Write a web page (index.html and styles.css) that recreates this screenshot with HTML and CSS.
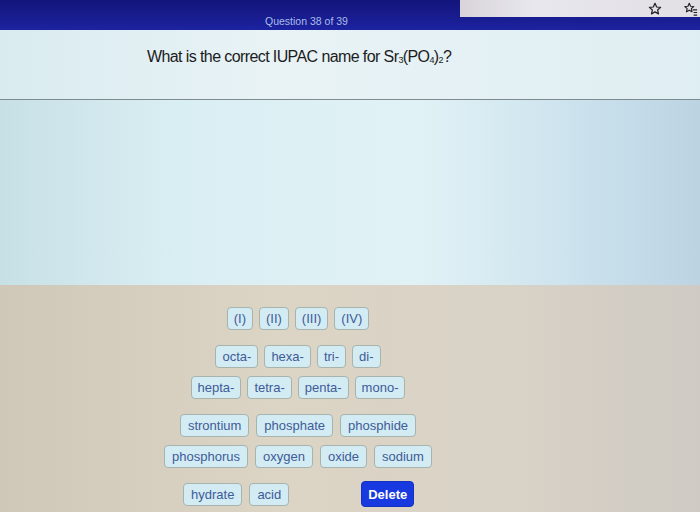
FILE: index.html
```html
<!DOCTYPE html>
<html>
<head>
<meta charset="utf-8">
<link rel="stylesheet" href="styles.css">
</head>
<body>
<div class="page">
  <div class="chrome">
    <svg class="ic" viewBox="0 0 16 16" width="14" height="14"><path d="M8 1.5l1.9 4.2 4.5.4-3.4 3 1 4.5L8 11.3 4 13.6l1-4.5-3.4-3 4.5-.4z" fill="none" stroke="#222" stroke-width="1.4" stroke-linejoin="round"/></svg>
    <svg class="ic" viewBox="0 0 16 16" width="14" height="14"><path d="M6 1.5l1.5 3.4 3.6.3-2.7 2.4.8 3.6L6 9.3 2.8 11.2l.8-3.6L.9 5.2l3.6-.3z" fill="none" stroke="#222" stroke-width="1.3" stroke-linejoin="round"/><path d="M10 9h5M11 12h4M11 15h4" stroke="#222" stroke-width="1.3"/></svg>
  </div>
  <header class="topbar">
    <span class="qnum">Question 38 of 39</span>
  </header>
  <section class="question">
    <p class="qtext">What is the correct IUPAC name for Sr<sub>3</sub>(PO<sub>4</sub>)<sub>2</sub>?</p>
  </section>
  <section class="answer"></section>
  <section class="bank">
    <div class="group">
      <div class="row"><span class="tile">(I)</span><span class="tile">(II)</span><span class="tile">(III)</span><span class="tile">(IV)</span></div>
    </div>
    <div class="group">
      <div class="row"><span class="tile">octa-</span><span class="tile">hexa-</span><span class="tile">tri-</span><span class="tile">di-</span></div>
      <div class="row"><span class="tile">hepta-</span><span class="tile">tetra-</span><span class="tile">penta-</span><span class="tile">mono-</span></div>
    </div>
    <div class="group wide">
      <div class="row"><span class="tile">strontium</span><span class="tile">phosphate</span><span class="tile">phosphide</span></div>
      <div class="row"><span class="tile">phosphorus</span><span class="tile">oxygen</span><span class="tile">oxide</span><span class="tile">sodium</span></div>
    </div>
    <div class="group wide">
      <div class="row left"><span class="tile">hydrate</span><span class="tile">acid</span><span class="tile delete">Delete</span></div>
    </div>
  </section>
</div>
</body>
</html>
```
FILE: styles.css
```css
* { box-sizing: border-box; }
html, body { margin: 0; padding: 0; }
body {
  width: 700px;
  height: 512px;
  overflow: hidden;
  font-family: "Liberation Sans", Arial, sans-serif;
  background: #d6d0c4;
}
.page {
  position: relative;
  width: 700px;
  height: 512px;
  display: flex;
  flex-direction: column;
}
.chrome {
  position: absolute;
  top: 0;
  right: 0;
  width: 240px;
  height: 17px;
  background: linear-gradient(90deg, #d8d4da, #e8e7ee 30%, #e2dfe4);
  display: flex;
  justify-content: flex-end;
  align-items: center;
  gap: 22px;
  padding-right: 2px;
}
.ic { display: block; }
.topbar {
  height: 30px;
  background: linear-gradient(180deg, #12157a, #1d22a0);
  padding-left: 265px;
  padding-top: 15px;
}
.qnum {
  color: #a9bde8;
  font-size: 10.5px;
  font-family: "Liberation Sans", Arial, sans-serif;
  display: block;
}
.question {
  height: 70px;
  background: linear-gradient(90deg, #d9ebef, #e9f3f6 40%, #dfeef2);
  border-bottom: 1px solid #7d8a90;
  padding-left: 147px;
  padding-top: 18px;
}
.qtext {
  margin: 0;
  font-size: 16px;
  letter-spacing: -0.6px;
  color: #1c1c22;
}
.qtext sub {
  font-size: 9px;
  vertical-align: -1px;
}
.answer {
  height: 185px;
  background: linear-gradient(90deg, #c7e0e6, #d9eef3 25%, #e1f2f6 60%, #c9e0ec 85%, #bcd3e2);
}
.bank {
  flex: 1;
  background: linear-gradient(90deg, #cfc7b7, #dcd4c4 40%, #d9d3c7 70%, #cfcac3);
  width: 700px;
  padding-top: 22px;
  padding-right: 104px;
  display: flex;
  flex-direction: column;
  gap: 15px;
}
.group {
  display: flex;
  flex-direction: column;
  gap: 8px;
}
.row {
  display: flex;
  justify-content: center;
  gap: 6px;
}
.group.wide .row { gap: 7px; }
.row.left {
  justify-content: flex-start;
  padding-left: 183px;
}
.tile {
  height: 23px;
  padding: 0 6px;
  display: flex;
  align-items: center;
  font-size: 13px;
  color: #3d5c98;
  background: #d3ebf3;
  border: 1px solid #a7b3ad;
  border-radius: 4px;
}
.group.wide .tile { padding: 0 7px; }
.group.wide .tile.delete {
  margin-left: 65px;
  background: #1839e0;
  border-color: #1430c0;
  color: #ffffff;
  font-weight: bold;
  padding: 0 6px;
  height: 26px;
  margin-top: -2px;
}
```
